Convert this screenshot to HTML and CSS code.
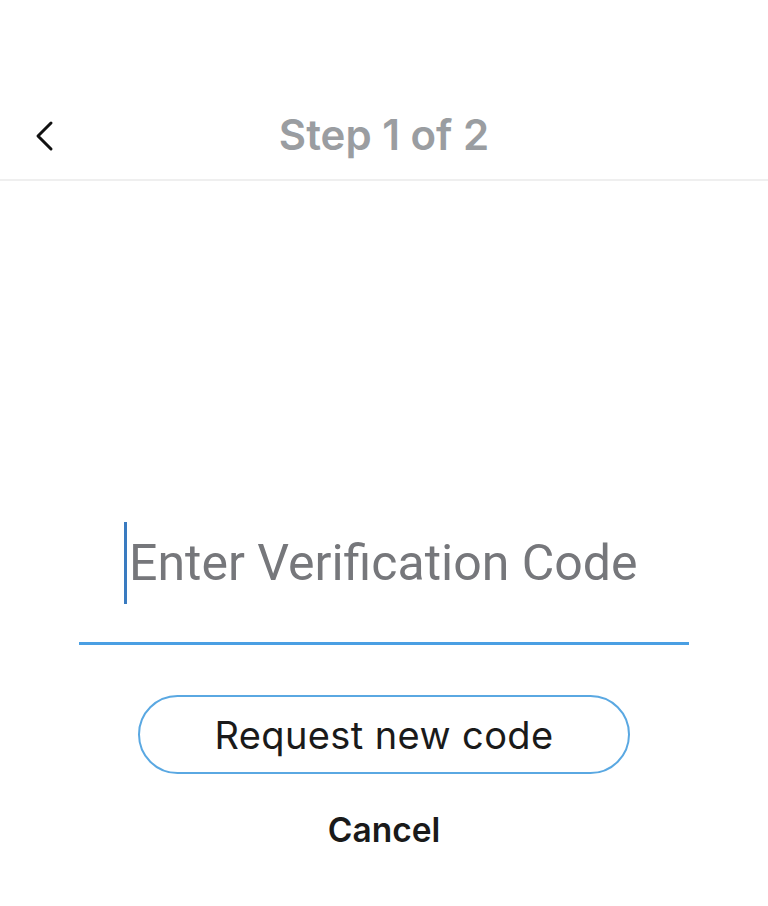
FILE: index.html
```html
<!DOCTYPE html>
<html>
<head>
<meta charset="utf-8">
<link rel="stylesheet" href="styles.css">
</head>
<body>
<div class="screen">
  <header class="topbar">
    <button class="back" aria-label="Back">
      <svg width="24" height="32" viewBox="0 0 24 32"><path d="M18 3 L5 16 L18 29" fill="none" stroke="#111" stroke-width="3" stroke-linecap="round" stroke-linejoin="round"/></svg>
    </button>
    <h1 class="title">Step 1 of 2</h1>
  </header>
  <main class="content">
    <div class="field">
      <span class="caret"></span><span class="placeholder">Enter Verification Code</span>
    </div>
    <button class="outline-btn">Request new code</button>
    <button class="link-btn">Cancel</button>
  </main>
</div>
</body>
</html>
```
FILE: styles.css
```css
* { box-sizing: border-box; }
html, body { margin: 0; padding: 0; background: #fff; }
body { font-family: Inter, "Noto Sans", sans-serif; width: 768px; height: 906px; overflow: hidden; }
.screen { display: flex; flex-direction: column; height: 100%; }
.topbar {
  margin-top: 90px;
  height: 91px;
  border-bottom: 2px solid #efefef;
  display: flex;
  align-items: center;
  justify-content: center;
  position: relative;
}
.back {
  position: absolute;
  left: 33px;
  top: 30px;
  background: none;
  border: 0;
  padding: 0;
  width: 24px;
  height: 32px;
}
.back svg { display: block; }
.title {
  margin: 0;
  font-size: 42px;
  font-weight: 600;
  color: #9a9da1;
  letter-spacing: 0;
}
.content {
  display: flex;
  flex-direction: column;
  align-items: center;
  padding-top: 341px;
}
.field {
  width: 610px;
  height: 123px;
  border-bottom: 3px solid #4a9fe3;
  display: flex;
  align-items: flex-start;
  padding-left: 45px;
}
.caret {
  width: 3px;
  height: 82px;
  background: #3a7bc0;
  margin-right: 2px;
  flex: none;
}
.placeholder {
  font-family: Roboto, sans-serif;
  font-weight: 400;
  font-size: 50px;
  color: #76777b;
  line-height: 82px;
}
.outline-btn {
  margin-top: 50px;
  width: 492px;
  height: 79px;
  border: 2px solid #5aa8e2;
  border-radius: 40px;
  background: #fff;
  font-family: Inter, sans-serif;
  font-size: 38px;
  letter-spacing: 0.4px;
  color: #1a1a1a;
  font-weight: 400;
}
.link-btn {
  margin-top: 36px;
  background: none;
  border: 0;
  padding: 0;
  font-family: Inter, sans-serif;
  font-size: 33.5px;
  font-weight: 600;
  color: #1a1a1a;
}
```
